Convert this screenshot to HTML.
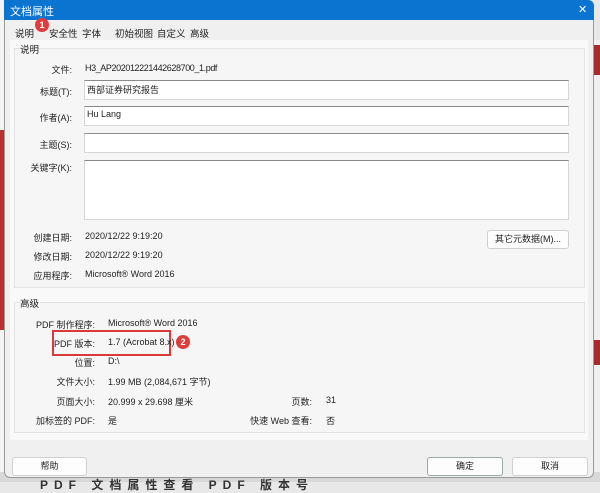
<!DOCTYPE html>
<html><head><meta charset="utf-8"><style>
body{margin:0;width:600px;height:482px;overflow:hidden;background:#e8e8e8;position:relative;font-family:"Liberation Sans","Noto Sans CJK SC",sans-serif;font-size:9px;color:#222}
.a{position:absolute;white-space:nowrap}
.r{text-align:right}
.in{position:absolute;background:#fff;border:1px solid #d6d6d6;border-top:1px solid #8a8a8a;box-sizing:border-box;padding:2px 2px;font-size:9px}
.btn{position:absolute;background:#fdfdfd;border:1px solid #d0d0d0;border-radius:3px;box-sizing:border-box;text-align:center;line-height:17px;font-size:9px}
.grp{position:absolute;border:1px solid #e4e4e4;background:#f6f6f6;box-sizing:border-box}
.badge{position:absolute;width:14px;height:14px;border-radius:50%;background:#e03c3c;color:#fff;font-size:9px;text-align:center;line-height:14px;font-weight:bold}
.v{letter-spacing:-0.4px}
</style></head><body>
<div class="a" style="left:0;top:0;width:4px;height:482px;background:#f4f4f4"></div>
<div class="a" style="left:0;top:130px;width:4px;height:200px;background:#b83030"></div>
<div class="a" style="left:594px;top:40px;width:6px;height:442px;background:#efefef"></div>
<div class="a" style="left:594px;top:45px;width:6px;height:30px;background:#a82a2a"></div>
<div class="a" style="left:594px;top:340px;width:6px;height:25px;background:#a82a2a"></div>
<div class="a" style="left:0;top:472px;width:600px;height:10px;background:#d8d8d8"></div>
<div class="a" style="left:40px;top:476px;font-size:12px;font-weight:bold;color:#333;letter-spacing:6px">PDF 文档属性查看 PDF 版本号</div>
<div class="a" style="left:4px;top:0;width:590px;height:478px;background:#f0f0f0;border:1px solid #9a9a9a;box-sizing:border-box;border-radius:0 6px 6px 6px"></div>
<div class="a" style="left:4px;top:0;width:590px;height:20px;background:#0a74d0;border-radius:0 6px 0 0"></div>
<div class="a" style="left:10px;top:3px;color:#fff;font-size:11px">文档属性</div>
<div class="a" style="left:578px;top:3px;color:#fff;font-size:11px">✕</div>
<div class="a" style="left:15px;top:26px;font-size:9.5px">说明</div>
<div class="a" style="left:49px;top:26px;font-size:9.5px">安全性</div>
<div class="a" style="left:82px;top:26px;font-size:9.5px">字体</div>
<div class="a" style="left:115px;top:26px;font-size:9.5px">初始视图</div>
<div class="a" style="left:157px;top:26px;font-size:9.5px">自定义</div>
<div class="a" style="left:190px;top:26px;font-size:9.5px">高级</div>
<div class="badge" style="left:35px;top:18px">1</div>
<div class="a" style="left:10px;top:40px;width:578px;height:400px;background:#f9f9f9"></div>
<div class="grp" style="left:14px;top:48px;width:571px;height:240px"></div>
<div class="a" style="left:20px;top:42px;font-size:9.5px">说明</div>
<div class="a r" style="left:0;width:72px;top:63px">文件:</div>
<div class="a v" style="left:85px;top:63px">H3_AP202012221442628700_1.pdf</div>
<div class="a r" style="left:0;width:72px;top:85px">标题(T):</div>
<div class="in" style="left:84px;top:80px;width:485px;height:20px">西部证券研究报告</div>
<div class="a r" style="left:0;width:72px;top:111px">作者(A):</div>
<div class="in" style="left:84px;top:106px;width:485px;height:20px">Hu Lang</div>
<div class="a r" style="left:0;width:72px;top:138px">主题(S):</div>
<div class="in" style="left:84px;top:133px;width:485px;height:20px"></div>
<div class="a r" style="left:0;width:72px;top:161px">关键字(K):</div>
<div class="in" style="left:84px;top:160px;width:485px;height:60px"></div>
<div class="a r" style="left:0;width:72px;top:231px">创建日期:</div>
<div class="a" style="left:85px;top:231px">2020/12/22 9:19:20</div>
<div class="a r" style="left:0;width:72px;top:250px">修改日期:</div>
<div class="a" style="left:85px;top:250px">2020/12/22 9:19:20</div>
<div class="a r" style="left:0;width:72px;top:269px">应用程序:</div>
<div class="a" style="left:85px;top:269px">Microsoft® Word 2016</div>
<div class="btn" style="left:487px;top:230px;width:82px;height:19px">其它元数据(M)...</div>
<div class="grp" style="left:14px;top:302px;width:571px;height:131px"></div>
<div class="a" style="left:20px;top:296px;font-size:9.5px">高级</div>
<div class="a r" style="left:0;width:95px;top:318px">PDF 制作程序:</div>
<div class="a" style="left:108px;top:318px">Microsoft® Word 2016</div>
<div class="a" style="left:52px;top:330px;width:119px;height:26px;border:2px solid #d83a3a;box-sizing:border-box"></div>
<div class="a r" style="left:0;width:95px;top:337px">PDF 版本:</div>
<div class="a" style="left:108px;top:337px">1.7 (Acrobat 8.x)</div>
<div class="badge" style="left:176px;top:335px">2</div>
<div class="a r" style="left:0;width:95px;top:356px">位置:</div>
<div class="a" style="left:108px;top:356px">D:\</div>
<div class="a r" style="left:0;width:95px;top:375px">文件大小:</div>
<div class="a" style="left:108px;top:375px">1.99 MB (2,084,671 字节)</div>
<div class="a r" style="left:0;width:95px;top:395px">页面大小:</div>
<div class="a" style="left:108px;top:395px">20.999 x 29.698 厘米</div>
<div class="a r" style="left:200px;width:112px;top:395px">页数:</div>
<div class="a" style="left:326px;top:395px">31</div>
<div class="a r" style="left:0;width:95px;top:414px">加标签的 PDF:</div>
<div class="a" style="left:108px;top:414px">是</div>
<div class="a r" style="left:200px;width:112px;top:414px">快速 Web 查看:</div>
<div class="a" style="left:326px;top:414px">否</div>
<div class="btn" style="left:12px;top:457px;width:75px;height:19px">帮助</div>
<div class="btn" style="left:427px;top:457px;width:76px;height:19px;border-color:#9aa">确定</div>
<div class="btn" style="left:512px;top:457px;width:76px;height:19px">取消</div>
</body></html>
